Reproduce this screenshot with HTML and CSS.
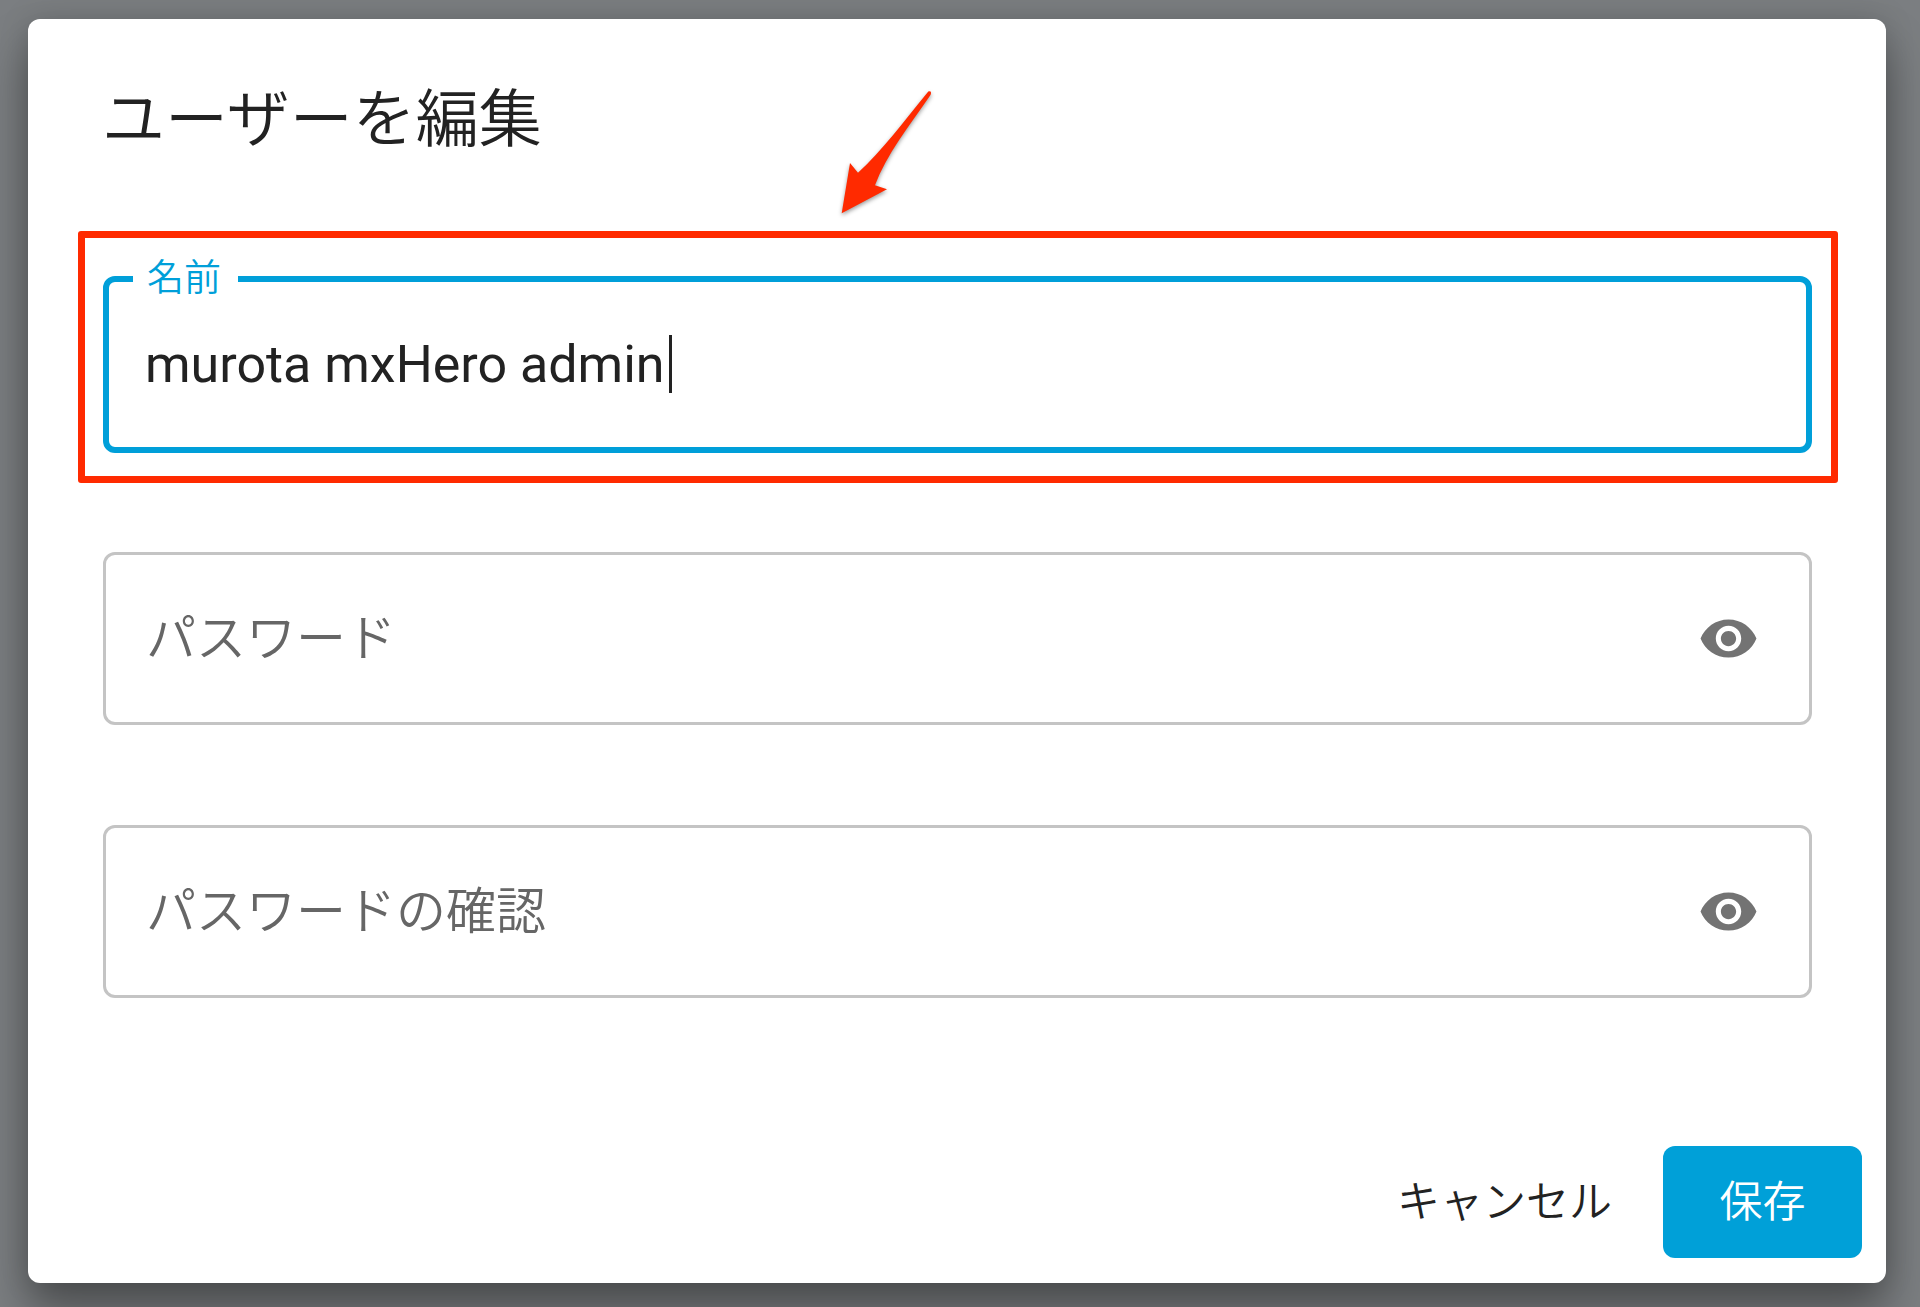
FILE: index.html
```html
<!DOCTYPE html>
<html lang="ja">
<head>
    <meta charset="UTF-8">
    <meta name="viewport" content="width=device-width, initial-scale=1.0">
    <title>ユーザーを編集</title>
    <link rel="stylesheet" href="styles.css">
</head>
<body>
    <form class="dialog" role="dialog" aria-labelledby="dialog-title">
        <h2 id="dialog-title">ユーザーを編集</h2>

        <!-- Name (focused) -->
        <div class="highlight">
            <svg class="arrow" viewBox="0 0 160 160" aria-hidden="true">
                <path d="M41.7 142.3 L50 92 L58 101.7 C82 80 104 50 127.500 21.500 Q128.500 19.500 130.500 20.500 Q131.500 21.500 130.500 24 C110 54 86 84 75 114.300 L87 118.300 Z"/>
            </svg>
            <fieldset class="name-field">
                <legend><label for="name">名前</label></legend>
                <input type="text" id="name" value="murota mxHero admin">
                <span class="caret"></span>
            </fieldset>
        </div>

        <!-- Passwords -->
        <div class="password-field">
            <label for="password">パスワード</label>
            <input type="password" id="password">
            <button type="button" class="eye" aria-label="パスワードを表示">
                <svg viewBox="0 0 24 24"><path d="M12 4.500C7 4.500 2.730 7.610 1 12c1.730 4.390 6 7.500 11 7.500s9.270-3.110 11-7.500c-1.730-4.390-6-7.500-11-7.500zM12 17c-2.760 0-5-2.240-5-5s2.240-5 5-5 5 2.240 5 5-2.240 5-5 5zm0-8c-1.660 0-3 1.340-3 3s1.340 3 3 3 3-1.340 3-3-1.340-3-3-3z"/></svg>
            </button>
        </div>
        <div class="password-field">
            <label for="confirm">パスワードの確認</label>
            <input type="password" id="confirm">
            <button type="button" class="eye" aria-label="パスワードを表示">
                <svg viewBox="0 0 24 24"><path d="M12 4.500C7 4.500 2.730 7.610 1 12c1.730 4.390 6 7.500 11 7.500s9.270-3.110 11-7.500c-1.730-4.390-6-7.500-11-7.500zM12 17c-2.760 0-5-2.240-5-5s2.240-5 5-5 5 2.240 5 5-2.240 5-5 5zm0-8c-1.660 0-3 1.340-3 3s1.340 3 3 3 3-1.340 3-3-1.340-3-3-3z"/></svg>
            </button>
        </div>

        <div class="actions">
            <button type="button" class="cancel">キャンセル</button>
            <button type="submit" class="save">保存</button>
        </div>
    </form>
</body>
</html>
```

FILE: styles.css
```css
* {
    box-sizing: border-box;
}
body {
    display: flex;
    min-height: 100vh;
    margin: 0;
    padding: 19px 34px 24px 28px;
    background: #7b7e81;
    color: #222;
    font-family: Roboto, "Noto Sans CJK JP", sans-serif;
    font-weight: 350;
}
.dialog {
    flex: 1;
    display: flex;
    flex-direction: column;
    padding: 0 24px 25px 50px;
    background: white;
    border-radius: 12px;
    box-shadow: 0 30px 45px rgba(0, 0, 0, 0.35), 0 0 30px rgba(0, 0, 0, 0.15);
}
h2 {
    margin: 0;
    padding: 56px 24px 66px;
    font-size: 63px;
    font-weight: 350;
    line-height: 90px;
}
input {
    width: 100%;
    min-width: 0;
    padding: 0;
    border: none;
    outline: none;
    background: none;
    color: #222;
    font: 400 52px Roboto, "Noto Sans CJK JP", sans-serif;
}
button {
    border: none;
    background: none;
    color: #222;
    font: inherit;
    cursor: pointer;
}
.highlight {
    position: relative;
    margin-right: 24px;
    padding: 20px 19px 23px 18px;
    border: 7px solid #ff2a00;
    border-radius: 3px;
}
.arrow {
    position: absolute;
    left: 715px;
    bottom: 245px;
    width: 160px;
    height: 160px;
    fill: #ff2a00;
    filter: drop-shadow(0 2px 2px rgba(0, 0, 0, 0.4));
}
.name-field {
    position: relative;
    min-width: 0;
    margin: 0;
    padding: 0 36px;
    border: 6px solid #009fd9;
    border-radius: 12px;
}
.name-field legend {
    margin-left: -12px;
    padding: 0 17px 0 14px;
    color: #009fd9;
    font-size: 37px;
    line-height: 42px;
}
.name-field input {
    display: block;
    height: 147px;
    padding-bottom: 18px;
    caret-color: transparent;
}
.caret {
    position: absolute;
    left: 560px;
    top: 35px;
    width: 3px;
    height: 58px;
    background: #222;
}
.password-field {
    display: grid;
    grid-template-columns: 1fr auto;
    align-items: center;
    height: 173px;
    margin: 69px 50px 0 25px;
    padding: 0 50px 0 40px;
    border: 3px solid #c4c4c4;
    border-radius: 12px;
}
.password-field + .password-field {
    margin-top: 100px;
}
.password-field label,
.password-field input {
    grid-area: 1 / 1;
}
.password-field label {
    padding-bottom: 10px;
    color: #666;
    font-size: 50px;
}
.eye {
    display: flex;
    padding: 0;
}
.eye svg {
    width: 61px;
    height: 61px;
    fill: #737373;
}
.actions {
    display: flex;
    justify-content: flex-end;
    gap: 8px;
    margin-top: auto;
    font-size: 43px;
}
.actions button {
    height: 112px;
    padding: 0 43px 8px;
    border-radius: 12px;
}
.actions .save {
    min-width: 199px;
    background: #00a0d8;
    color: white;
}
```
